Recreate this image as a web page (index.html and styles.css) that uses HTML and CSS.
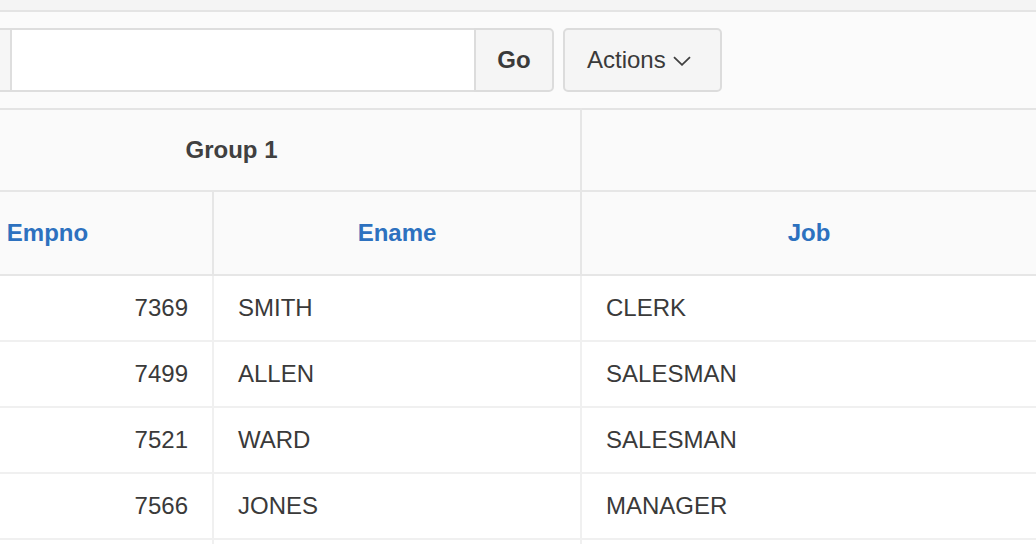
FILE: index.html
```html
<!DOCTYPE html>
<html>
<head>
<meta charset="utf-8">
<link rel="stylesheet" href="styles.css">
</head>
<body>
<div class="topbar"></div>
<div class="region">
  <div class="toolbar">
    <div class="search-group">
      <button class="col-select" type="button" aria-label="Search column"></button>
      <input class="search-input" type="text">
      <button class="go-btn" type="button">Go</button>
    </div>
    <button class="actions-btn" type="button">Actions
      <svg class="chev" width="18" height="10" viewBox="0 0 18 10"><path d="M1 1.2 L9 8.8 L17 1.2" fill="none" stroke="#404040" stroke-width="1.8"/></svg>
    </button>
  </div>
  <table class="report">
    <colgroup>
      <col class="c1"><col class="c2"><col class="c3">
    </colgroup>
    <thead>
      <tr class="group-row">
        <th colspan="2" class="group-h">Group 1</th>
        <th class="group-h"></th>
      </tr>
      <tr class="col-row">
        <th><a href="#">Empno</a></th>
        <th><a href="#">Ename</a></th>
        <th><a href="#">Job</a></th>
      </tr>
    </thead>
    <tbody>
      <tr><td class="num">7369</td><td>SMITH</td><td>CLERK</td></tr>
      <tr><td class="num">7499</td><td>ALLEN</td><td>SALESMAN</td></tr>
      <tr><td class="num">7521</td><td>WARD</td><td>SALESMAN</td></tr>
      <tr><td class="num">7566</td><td>JONES</td><td>MANAGER</td></tr>
      <tr class="partial"><td class="num"></td><td></td><td></td></tr>
    </tbody>
  </table>
</div>
</body>
</html>
```

FILE: styles.css
```css
html, body {
  margin: 0;
  padding: 0;
  background: #fbfbfb;
  overflow: hidden;
  width: 1036px;
  height: 544px;
}

body {
  font-family: "Liberation Sans", Arial, Helvetica, sans-serif;
  color: #3c3c3c;
}

.topbar {
  height: 10px;
  background: #f4f4f4;
  border-bottom: 2px solid #e4e4e4;
}

.region {
  margin-left: -117px;
  width: 1153px;
}

.toolbar {
  display: flex;
  align-items: stretch;
  gap: 9px;
  padding: 16px 0 16px 0;
  background: #fbfbfb;
}

.search-group {
  display: flex;
  height: 64px;
  box-sizing: border-box;
}

.col-select {
  width: 129px;
  box-sizing: border-box;
  background: #f6f6f6;
  border: 2px solid #dedede;
  border-radius: 4px 0 0 4px;
  margin: 0;
  padding: 0;
}

.search-input {
  width: 462px;
  height: 64px;
  box-sizing: border-box;
  border: 2px solid #dedede;
  border-left: none;
  border-right: none;
  background: #ffffff;
  margin: 0;
  padding: 0 12px;
  outline: none;
}

.go-btn {
  width: 80px;
  height: 64px;
  box-sizing: border-box;
  margin: 0;
  background: #f5f5f5;
  border: 2px solid #dcdcdc;
  border-radius: 0 5px 5px 0;
  font-family: "Liberation Sans", Arial, Helvetica, sans-serif;
  font-weight: bold;
  font-size: 24px;
  color: #3a3a3a;
  padding: 0;
}

.actions-btn {
  display: flex;
  align-items: center;
  height: 64px;
  box-sizing: border-box;
  margin: 0;
  padding: 0 29px 0 22px;
  background: #f5f5f5;
  border: 2px solid #dcdcdc;
  border-radius: 5px;
  font-family: "Liberation Sans", Arial, Helvetica, sans-serif;
  font-size: 24px;
  color: #3a3a3a;
}

.chev {
  margin-left: 7px;
  margin-top: 2px;
}

.report {
  border-collapse: collapse;
  table-layout: fixed;
  width: 1153px;
  border-top: 2px solid #e4e4e4;
}

.c1 { width: 330px; }
.c2 { width: 368px; }
.c3 { width: 455px; }

.report th {
  background: #fafafa;
  font-weight: bold;
  font-size: 24px;
  text-align: center;
  padding: 0;
  border-bottom: 2px solid #e6e6e6;
  border-left: 2px solid #e6e6e6;
}

.report th:first-child {
  border-left: none;
}

.group-row th {
  height: 80px;
  color: #404040;
}

.col-row th {
  height: 82px;
}

.col-row a {
  color: #2d71bf;
  text-decoration: none;
}

.report td {
  height: 64px;
  padding: 0 24px;
  font-size: 24px;
  color: #3a3a3a;
  background: #ffffff;
  border-bottom: 2px solid #f0f0f0;
  border-left: 2px solid #f0f0f0;
  white-space: nowrap;
}

.report td:first-child {
  border-left: none;
}

.report td.num {
  text-align: right;
}
```
